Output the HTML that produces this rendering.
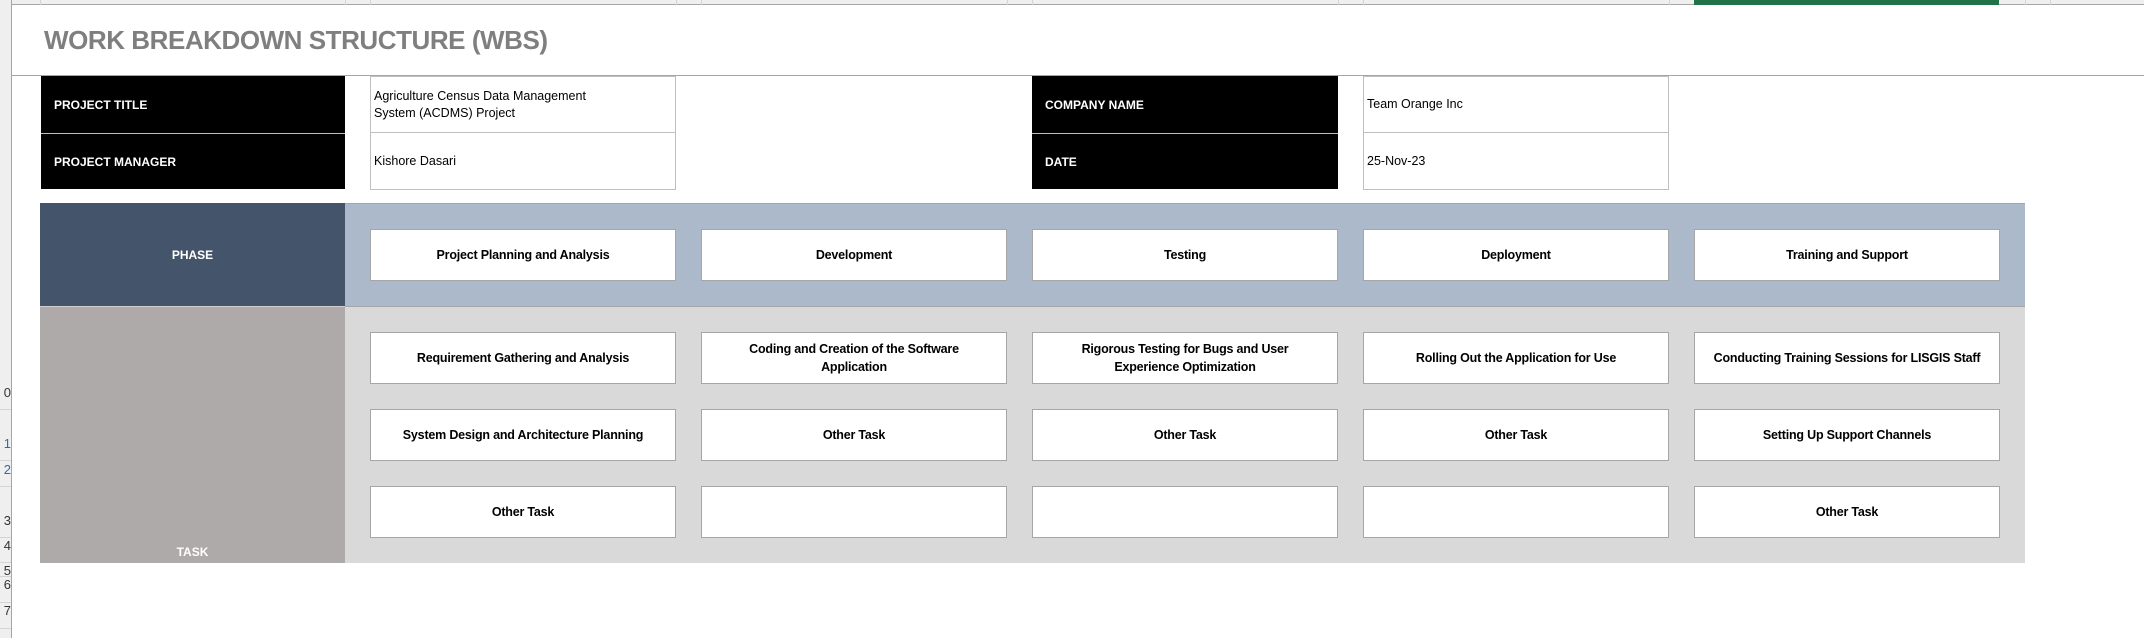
<!DOCTYPE html>
<html><head><meta charset="utf-8"><style>
*{margin:0;padding:0;box-sizing:border-box}
body{width:2144px;height:638px;background:#fff;position:relative;overflow:hidden;font-family:"Liberation Sans",sans-serif}
.a{position:absolute}
.blk{background:#000;color:#fff;font-weight:bold;font-size:12px;display:flex;align-items:center;padding-left:13px}
.val{border:1px solid #bfbfbf;font-size:12.5px;display:flex;align-items:center;padding-left:3px;color:#000;line-height:17px}
.bx{background:#fff;border:1px solid #a6a6a6;font-weight:bold;font-size:12.5px;display:flex;align-items:center;justify-content:center;text-align:center;line-height:18px;letter-spacing:-0.2px;color:#000}
.rn{position:absolute;left:0;width:11px;font-size:13px;color:#333;border-bottom:1px solid #d4d4d4;text-align:right;overflow:hidden}
.cl{position:absolute;top:0;width:1px;height:5px;background:#d4d4d4}
</style></head><body>
<div class="a" style="left:0;top:0;width:2144px;height:5px;background:#efefef;border-bottom:1px solid #a6a6a6"></div>
<div class="cl" style="left:40px"></div><div class="cl" style="left:345px"></div><div class="cl" style="left:370px"></div><div class="cl" style="left:676px"></div><div class="cl" style="left:701px"></div><div class="cl" style="left:1007px"></div><div class="cl" style="left:1032px"></div><div class="cl" style="left:1338px"></div><div class="cl" style="left:1363px"></div><div class="cl" style="left:1669px"></div><div class="cl" style="left:2025px"></div><div class="cl" style="left:2050px"></div>
<div class="a" style="left:1694px;top:0;width:305px;height:5px;background:#217346"></div>
<div class="a" style="left:0;top:0;width:12px;height:638px;background:#efefef;border-right:1px solid #a6a6a6"></div>
<div class="a" style="left:12px;top:75px;width:2132px;height:1px;background:#a6a6a6"></div>
<div class="a" style="left:44px;top:25px;font-size:26px;font-weight:bold;color:#7f7f7f;letter-spacing:-0.45px;white-space:nowrap">WORK BREAKDOWN STRUCTURE (WBS)</div>

<div class="a blk" style="left:41px;top:76px;width:304px;height:57px">PROJECT TITLE</div>
<div class="a blk" style="left:41px;top:133px;width:304px;height:56px;border-top:1px solid #bfbfbf">PROJECT MANAGER</div>
<div class="a val" style="left:370px;top:76px;width:306px;height:57px">Agriculture Census Data Management<br>System (ACDMS) Project</div>
<div class="a val" style="left:370px;top:132px;width:306px;height:58px">Kishore Dasari</div>
<div class="a blk" style="left:1032px;top:76px;width:306px;height:57px">COMPANY NAME</div>
<div class="a blk" style="left:1032px;top:133px;width:306px;height:56px;border-top:1px solid #bfbfbf">DATE</div>
<div class="a val" style="left:1363px;top:76px;width:306px;height:57px">Team Orange Inc</div>
<div class="a val" style="left:1363px;top:132px;width:306px;height:58px">25-Nov-23</div>

<div class="a" style="left:345px;top:203px;width:1680px;height:103px;background:#acb9ca;border-top:1px solid #a6a6a6"></div>
<div class="a" style="left:40px;top:203px;width:305px;height:103px;background:#44546a;color:#fff;font-weight:bold;font-size:12px;display:flex;align-items:center;justify-content:center">PHASE</div>
<div class="a" style="left:345px;top:306px;width:1680px;height:257px;background:#d9d9d9;border-top:1px solid #a6a6a6"></div>
<div class="a" style="left:40px;top:306px;width:305px;height:257px;background:#aeaaaa;color:#fff;font-weight:bold;font-size:12px;text-align:center;padding-top:238px;border-top:1px solid #d0cece">TASK</div>

<div class="a bx" style="left:370px;top:229px;width:306px;height:52px">Project Planning and Analysis</div>
<div class="a bx" style="left:701px;top:229px;width:306px;height:52px">Development</div>
<div class="a bx" style="left:1032px;top:229px;width:306px;height:52px">Testing</div>
<div class="a bx" style="left:1363px;top:229px;width:306px;height:52px">Deployment</div>
<div class="a bx" style="left:1694px;top:229px;width:306px;height:52px">Training and Support</div>

<div class="a bx" style="left:370px;top:332px;width:306px;height:52px">Requirement Gathering and Analysis</div>
<div class="a bx" style="left:701px;top:332px;width:306px;height:52px">Coding and Creation of the Software<br>Application</div>
<div class="a bx" style="left:1032px;top:332px;width:306px;height:52px">Rigorous Testing for Bugs and User<br>Experience Optimization</div>
<div class="a bx" style="left:1363px;top:332px;width:306px;height:52px">Rolling Out the Application for Use</div>
<div class="a bx" style="left:1694px;top:332px;width:306px;height:52px">Conducting Training Sessions for LISGIS Staff</div>

<div class="a bx" style="left:370px;top:409px;width:306px;height:52px">System Design and Architecture Planning</div>
<div class="a bx" style="left:701px;top:409px;width:306px;height:52px">Other Task</div>
<div class="a bx" style="left:1032px;top:409px;width:306px;height:52px">Other Task</div>
<div class="a bx" style="left:1363px;top:409px;width:306px;height:52px">Other Task</div>
<div class="a bx" style="left:1694px;top:409px;width:306px;height:52px">Setting Up Support Channels</div>

<div class="a bx" style="left:370px;top:486px;width:306px;height:52px">Other Task</div>
<div class="a bx" style="left:701px;top:486px;width:306px;height:52px"></div>
<div class="a bx" style="left:1032px;top:486px;width:306px;height:52px"></div>
<div class="a bx" style="left:1363px;top:486px;width:306px;height:52px"></div>
<div class="a bx" style="left:1694px;top:486px;width:306px;height:52px">Other Task</div>

<div class="rn" style="top:385px;height:25px">0</div>
<div class="rn" style="top:436px;height:25px;color:#2b6cb0">1</div>
<div class="rn" style="top:462px;height:25px;color:#2b6cb0">2</div>
<div class="rn" style="top:513px;height:25px">3</div>
<div class="rn" style="top:538px;height:25px">4</div>
<div class="rn" style="top:563px;height:14px">5</div>
<div class="rn" style="top:577px;height:26px">6</div>
<div class="rn" style="top:603px;height:26px">7</div>
</body></html>
